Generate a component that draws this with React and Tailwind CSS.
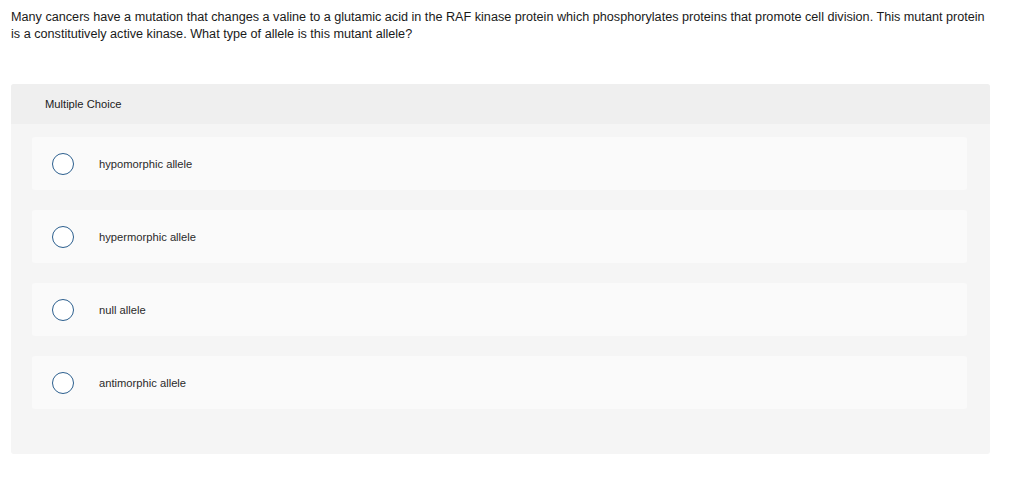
const options = [
  'hypomorphic allele',
  'hypermorphic allele',
  'null allele',
  'antimorphic allele',
]

export default function App() {
  return (
    <div className="min-h-screen bg-white pt-[9px] pl-[11px] pr-[34px] text-[#222]" style={{ fontFamily: '"Liberation Sans", Arial, sans-serif' }}>
      {/* Pregunta */}
      <p className="text-[12.65px] leading-[17px] text-[#1a1a1a]">
        Many cancers have a mutation that changes a valine to a glutamic acid in the RAF kinase protein which phosphorylates proteins that promote cell division. This mutant protein is a constitutively active kinase. What type of allele is this mutant allele?
      </p>

      {/* Panel de respuestas */}
      <div className="mt-[41px] w-[979px] rounded-[3px] bg-[#f5f5f5] pb-[45px]">
        <div className="h-[40px] rounded-t-[3px] bg-[#efefef] pl-[34px] flex items-center text-[11.2px] text-[#222]">
          Multiple Choice
        </div>
        <div className="pt-[13px] pl-[21px] pr-[23px] flex flex-col gap-[20px]">
          {options.map(opt => (
            <div key={opt} className="h-[53px] rounded-[3px] bg-[#fafafa] flex items-center pl-[20px]">
              <span className="w-[22px] h-[22px] rounded-full border-[1.5px] border-[#2c5f8e] bg-white shrink-0" />
              <span className="ml-[25px] pt-[2px] text-[11.2px] text-[#2a2a2a]">{opt}</span>
            </div>
          ))}
        </div>
      </div>
    </div>
  )
}
